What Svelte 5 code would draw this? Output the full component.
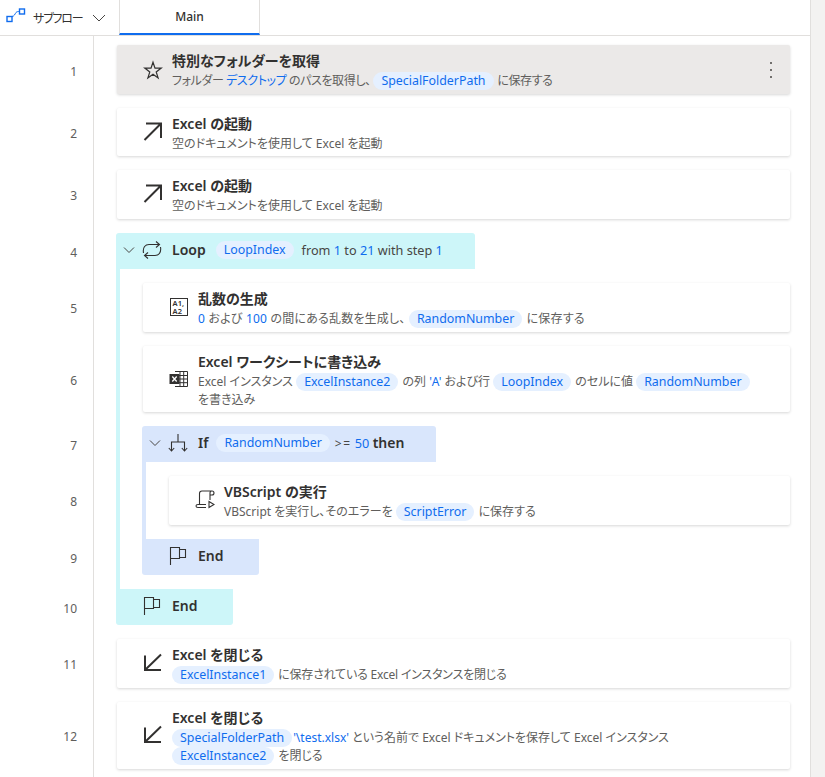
<script>
  const ink = '#323130';
</script>

{#snippet chip(text)}<span class="chip">{text}</span>{/snippet}

{#snippet chevron()}
  <svg class="chev" width="12" height="12" viewBox="0 0 12 12" fill="none" stroke="#484644" stroke-width="1"><path d="M1 3.5 L6 8.5 L11 3.5" /></svg>
{/snippet}

{#snippet starIcon()}
  <svg width="20" height="20" viewBox="0 0 20 20" fill="none" stroke={ink} stroke-width="1.2" stroke-linejoin="miter"><path d="M10 2.2 L12 8.1 L18.2 8.1 L13.2 11.9 L15.1 17.9 L10 14.2 L4.9 17.9 L6.8 11.9 L1.8 8.1 L8 8.1 Z" /></svg>
{/snippet}

{#snippet openIcon()}
  <svg width="20" height="20" viewBox="0 0 20 20" fill="none" stroke={ink} stroke-width="2"><path d="M3 1.5 H18 V16 M18 1.5 L1.5 18" /></svg>
{/snippet}

{#snippet closeIcon()}
  <svg width="20" height="20" viewBox="0 0 20 20" fill="none" stroke={ink} stroke-width="2"><path d="M2 2.5 V17 H18 M2 17 L18 1.5" /></svg>
{/snippet}

{#snippet loopIcon()}
  <svg width="20" height="20" viewBox="0 0 20 20" fill="none" stroke={ink} stroke-width="1.1"><path d="M1.5 13 C0.5 7 3.5 4.5 7 4.5 H17 M14 1.5 L17.5 4.5 L14 7.5 M18.5 7 C19.5 13 16.5 15.5 13 15.5 H3 M6 12.5 L2.5 15.5 L6 18.5" /></svg>
{/snippet}

{#snippet randIcon()}
  <svg width="20" height="20" viewBox="0 0 20 20"><rect x="1.5" y="1.5" width="17" height="17" fill="none" stroke={ink} stroke-width="1" /><text x="3.6" y="9" class="tiny">A1,</text><text x="3.6" y="16.5" class="tiny">A2</text></svg>
{/snippet}

{#snippet excelIcon()}
  <svg width="20" height="20" viewBox="0 0 20 20" fill="none"><path d="M6 2.5 H18.5 V17.5 H6 M11 2.5 V17.5 M6 6.5 H18.5 M6 10 H18.5 M6 13.7 H18.5 M14.7 2.5 V17.5" stroke={ink} stroke-width="1" /><rect x="0.5" y="5" width="10" height="10" fill="#323130" /><path d="M3.3 7.5 L7.7 12.5 M7.7 7.5 L3.3 12.5" stroke="#fff" stroke-width="1.3" /></svg>
{/snippet}

{#snippet ifIcon()}
  <svg width="20" height="20" viewBox="0 0 20 20" fill="none" stroke={ink} stroke-width="1.1"><path d="M10 1 V9 M3.5 18 V9 H16.5 V18 M0.8 15 L3.5 18 L6.2 15 M13.8 15 L16.5 18 L19.2 15" /></svg>
{/snippet}

{#snippet scriptIcon()}
  <svg width="20" height="20" viewBox="0 0 20 20" fill="none" stroke={ink} stroke-width="1.1"><path d="M4.5 15 V3.5 C4.5 2 5.5 1 7 1 H17 C18.5 1 19 2 19 3 C19 4.5 18 5 17 5 H15 V3 C15 2 15.5 1 17 1 M15 5 V10 M11 17.5 H3 C1.5 17.5 1 16.5 1 16 C1 15 2 14.5 3 14.5 H11 M3 17.5 H10" /><path d="M14 11.5 L19 14.5 L14 17.5 Z" /></svg>
{/snippet}

{#snippet flagIcon()}
  <svg width="20" height="20" viewBox="0 0 20 20" fill="none" stroke={ink} stroke-width="1.1"><path d="M2.5 1 V19 M2.5 1.5 H11.5 V12.5 H2.5 M11.5 3.5 H17.5 V11.5 H11.5" /></svg>
{/snippet}

<div class="page">
  <div class="main">
    <header class="topbar">
      <div class="subflows">
        <svg class="subflow-icon" width="20" height="16" viewBox="0 0 20 16" fill="none" stroke="#0f6cee" stroke-width="1.4"><rect x="1" y="8.5" width="5" height="5" /><rect x="13.5" y="1" width="5" height="5" /><path d="M6 8.5 C8 8.5 9 6 10 4.5 C11 3.5 12 3.5 13.5 3.5" stroke-width="1" /></svg>
        <span>サブフロー</span>
        <svg class="menu" width="14" height="14" viewBox="0 0 14 14" fill="none" stroke="#484644" stroke-width="1"><path d="M1 4 L7 10 L13 4" /></svg>
      </div>
      <div class="tab">Main</div>
    </header>

    <div class="list">
      <div class="row">
        <div class="num">1</div>
        <div class="body"><div class="cell">
          <div class="card selected">
            <div class="icon">{@render starIcon()}</div>
            <div class="text">
              <div class="title">特別なフォルダーを取得</div>
              <div class="desc chipline tight">フォルダー <span class="val">デスクトップ</span> のパスを取得し、 {@render chip('SpecialFolderPath')} に保存する</div>
            </div>
            <div class="dots"><i></i><i></i><i></i></div>
          </div>
        </div></div>
      </div>

      <div class="row">
        <div class="num">2</div>
        <div class="body"><div class="cell">
          <div class="card">
            <div class="icon">{@render openIcon()}</div>
            <div class="text">
              <div class="title">Excel の起動</div>
              <div class="desc">空のドキュメントを使用して Excel を起動</div>
            </div>
          </div>
        </div></div>
      </div>

      <div class="row">
        <div class="num">3</div>
        <div class="body"><div class="cell">
          <div class="card">
            <div class="icon">{@render openIcon()}</div>
            <div class="text">
              <div class="title">Excel の起動</div>
              <div class="desc">空のドキュメントを使用して Excel を起動</div>
            </div>
          </div>
        </div></div>
      </div>

      <div class="row">
        <div class="num">4</div>
        <div class="body"><div class="cell head">
          <div class="block loop">
            {@render chevron()}
            <div class="block-icon">{@render loopIcon()}</div>
            <span class="kw">Loop</span>
            {@render chip('LoopIndex')}
            <span class="expr">from <span class="val">1</span> to <span class="val">21</span> with step <span class="val">1</span></span>
          </div>
          <div class="stub"></div>
        </div></div>
      </div>

      <div class="row">
        <div class="num">5</div>
        <div class="body"><div class="guide"><div class="cell">
          <div class="card">
            <div class="icon">{@render randIcon()}</div>
            <div class="text">
              <div class="title">乱数の生成</div>
              <div class="desc chipline loose"><span class="val">0</span> および <span class="val">100</span> の間にある乱数を生成し、 {@render chip('RandomNumber')} に保存する</div>
            </div>
          </div>
        </div></div></div>
      </div>

      <div class="row">
        <div class="num">6</div>
        <div class="body"><div class="guide"><div class="cell">
          <div class="card">
            <div class="icon">{@render excelIcon()}</div>
            <div class="text">
              <div class="title">Excel ワークシートに書き込み</div>
              <div class="desc chipline">Excel インスタンス {@render chip('ExcelInstance2')} の列 <span class="val">'A'</span> および行 {@render chip('LoopIndex')} のセルに値 {@render chip('RandomNumber')}</div>
              <div class="desc">を書き込み</div>
            </div>
          </div>
        </div></div></div>
      </div>

      <div class="row">
        <div class="num">7</div>
        <div class="body"><div class="guide"><div class="cell head">
          <div class="block branch">
            {@render chevron()}
            <div class="block-icon">{@render ifIcon()}</div>
            <span class="kw">If</span>
            {@render chip('RandomNumber')}
            <span class="expr"><span class="op">&gt;=</span> <span class="val">50</span> <span class="then">then</span></span>
          </div>
          <div class="stub blue"></div>
        </div></div></div>
      </div>

      <div class="row">
        <div class="num">8</div>
        <div class="body"><div class="guide"><div class="guide blue"><div class="cell">
          <div class="card">
            <div class="icon">{@render scriptIcon()}</div>
            <div class="text">
              <div class="title">VBScript の実行</div>
              <div class="desc chipline">VBScript を実行し、そのエラーを {@render chip('ScriptError')} に保存する</div>
            </div>
          </div>
        </div></div></div></div>
      </div>

      <div class="row">
        <div class="num">9</div>
        <div class="body"><div class="guide"><div class="cell tail">
          <div class="stub blue"></div>
          <div class="block branch end">
            <div class="block-icon">{@render flagIcon()}</div>
            <span class="kw">End</span>
          </div>
        </div></div></div>
      </div>

      <div class="row">
        <div class="num">10</div>
        <div class="body"><div class="cell tail">
          <div class="stub"></div>
          <div class="block loop end">
            <div class="block-icon">{@render flagIcon()}</div>
            <span class="kw">End</span>
          </div>
        </div></div>
      </div>

      <div class="row">
        <div class="num">11</div>
        <div class="body"><div class="cell">
          <div class="card">
            <div class="icon">{@render closeIcon()}</div>
            <div class="text">
              <div class="title">Excel を閉じる</div>
              <div class="desc chipline slight">{@render chip('ExcelInstance1')} に保存されている Excel インスタンスを閉じる</div>
            </div>
          </div>
        </div></div>
      </div>

      <div class="row">
        <div class="num">12</div>
        <div class="body"><div class="cell">
          <div class="card">
            <div class="icon">{@render closeIcon()}</div>
            <div class="text">
              <div class="title">Excel を閉じる</div>
              <div class="desc chipline">{@render chip('SpecialFolderPath')}<span class="val">'\test.xlsx'</span> という名前で Excel ドキュメントを保存して Excel インスタンス</div>
              <div class="desc chipline">{@render chip('ExcelInstance2')} を閉じる</div>
            </div>
          </div>
        </div></div>
      </div>
    </div>
  </div>
  <div class="scrollbar"></div>
</div>

<style>
  :global(body) {
    margin: 0;
    background: #fff;
    font-family: "Noto Sans", "Noto Sans CJK JP", sans-serif;
    font-feature-settings: "palt";
    color: #323130;
    overflow: hidden;
  }

  .page {
    display: flex;
    height: 777px;
    overflow: hidden;
  }

  .main {
    flex: 1;
    display: flex;
    flex-direction: column;
    min-width: 0;
  }

  .scrollbar {
    width: 14px;
    background: #f3f2f1;
    border-left: 1px solid #e1dfdd;
  }

  /* --- Top bar --- */
  .topbar {
    display: flex;
    height: 35px;
    border-bottom: 1px solid #e1dfdd;
    flex-shrink: 0;
  }

  .subflows {
    width: 119px;
    display: flex;
    align-items: center;
    padding-left: 6px;
    box-sizing: border-box;
    font-size: 12px;
    gap: 8px;
  }

  .subflows span {
    margin-left: -1px;
    letter-spacing: -1.2px;
  }

  .subflow-icon {
    margin-top: -4px;
  }

  .menu {
    margin-left: 2px;
  }

  .tab {
    width: 141px;
    box-sizing: border-box;
    border-left: 1px solid #e1dfdd;
    border-right: 1px solid #e1dfdd;
    border-bottom: 2px solid #0f6cee;
    text-align: center;
    font-size: 12px;
    font-weight: 500;
    line-height: 33px;
  }

  /* --- Rows --- */
  .list {
    position: relative;
    flex: 1;
    padding-top: 2px;
  }

  .list::before {
    content: '';
    position: absolute;
    left: 93px;
    top: 0;
    bottom: 0;
    width: 1px;
    background: #e1dfdd;
  }

  .row {
    display: flex;
    align-items: stretch;
  }

  .num {
    width: 77px;
    flex-shrink: 0;
    text-align: right;
    align-self: center;
    font-size: 12px;
    color: #605e5c;
    padding-top: 3px;
  }

  .body {
    flex: 1;
    min-width: 0;
    padding: 0 20px 0 39px;
  }

  .guide {
    border-left: 4px solid #cdf6f9;
    padding-left: 22px;
  }

  .guide.blue {
    border-left-color: #d9e6fc;
  }

  .cell {
    padding: 7px 0;
  }

  .cell.head {
    padding-bottom: 0;
  }

  .cell.tail {
    padding-top: 0;
  }

  .stub {
    width: 4px;
    height: 7px;
    background: #cdf6f9;
  }

  .stub.blue {
    background: #d9e6fc;
  }

  /* --- Action cards --- */
  .card {
    display: flex;
    align-items: center;
    margin-left: 1px;
    padding: 7px 0 4px;
    background: #fff;
    border-radius: 2px;
    box-shadow: 0 1px 3px rgba(0, 0, 0, 0.16);
  }

  .card.selected {
    background: #ebe9e8;
  }

  .icon {
    width: 55px;
    flex-shrink: 0;
    display: flex;
    padding-left: 26px;
    margin-bottom: 3px;
    box-sizing: border-box;
  }

  .icon svg {
    display: block;
  }

  .text {
    flex: 1;
    min-width: 0;
  }

  .title {
    font-size: 14px;
    font-weight: 600;
    line-height: 19px;
    margin: -1px 0 2px;
    color: #323130;
  }

  .desc {
    font-size: 12px;
    line-height: 17.25px;
    color: #605e5c;
    white-space: nowrap;
  }

  .desc.chipline {
    line-height: 18px;
  }

  .desc.tight {
    letter-spacing: -0.4px;
  }

  .desc.slight {
    letter-spacing: -0.2px;
  }

  .desc.loose {
    letter-spacing: 0.2px;
  }

  .chip {
    display: inline-block;
    height: 18px;
    line-height: 18px;
    padding: 0 8px;
    margin-right: 1px;
    border-radius: 9px;
    background: #e5f0ff;
    color: #0f6cee;
    font-size: 12.4px;
    letter-spacing: 0;
    vertical-align: top;
  }

  .val {
    color: #0f6cee;
  }

  .dots {
    display: flex;
    flex-direction: column;
    gap: 5px;
    margin-right: 18px;
    margin-bottom: 3px;
  }

  .dots i {
    display: block;
    width: 2px;
    height: 2px;
    border-radius: 50%;
    background: #484644;
  }

  /* --- Loop and If blocks --- */
  .block {
    display: inline-flex;
    align-items: center;
    height: 36px;
    box-sizing: border-box;
    padding-right: 32px;
    padding-bottom: 2px;
    vertical-align: top;
    position: relative;
    border-radius: 3px 3px 0 0;
  }

  .block.loop {
    background: #cdf6f9;
  }

  .block.branch {
    background: #d9e6fc;
  }

  .block.end {
    width: 117px;
    padding: 0 0 2px;
    border-radius: 0 0 3px 3px;
    display: flex;
  }

  .chev {
    margin-left: 7px;
    flex-shrink: 0;
  }

  .block-icon {
    display: flex;
    margin-left: 7px;
    margin-right: 10px;
  }

  .end .block-icon {
    margin-left: 26px;
  }

  .kw {
    font-size: 14px;
    font-weight: 600;
    margin-right: 8px;
  }

  .loop .kw {
    margin-right: 10px;
  }

  .expr {
    font-size: 12.7px;
    margin-left: 7px;
    color: #484644;
    white-space: nowrap;
  }

  .op {
    font-size: 12px;
    margin-left: -3px;
    letter-spacing: 1.5px;
  }

  .then {
    font-size: 14px;
    font-weight: 600;
    color: #323130;
  }

  .tiny {
    font-size: 7.5px;
    font-weight: 600;
    fill: #323130;
  }
</style>
